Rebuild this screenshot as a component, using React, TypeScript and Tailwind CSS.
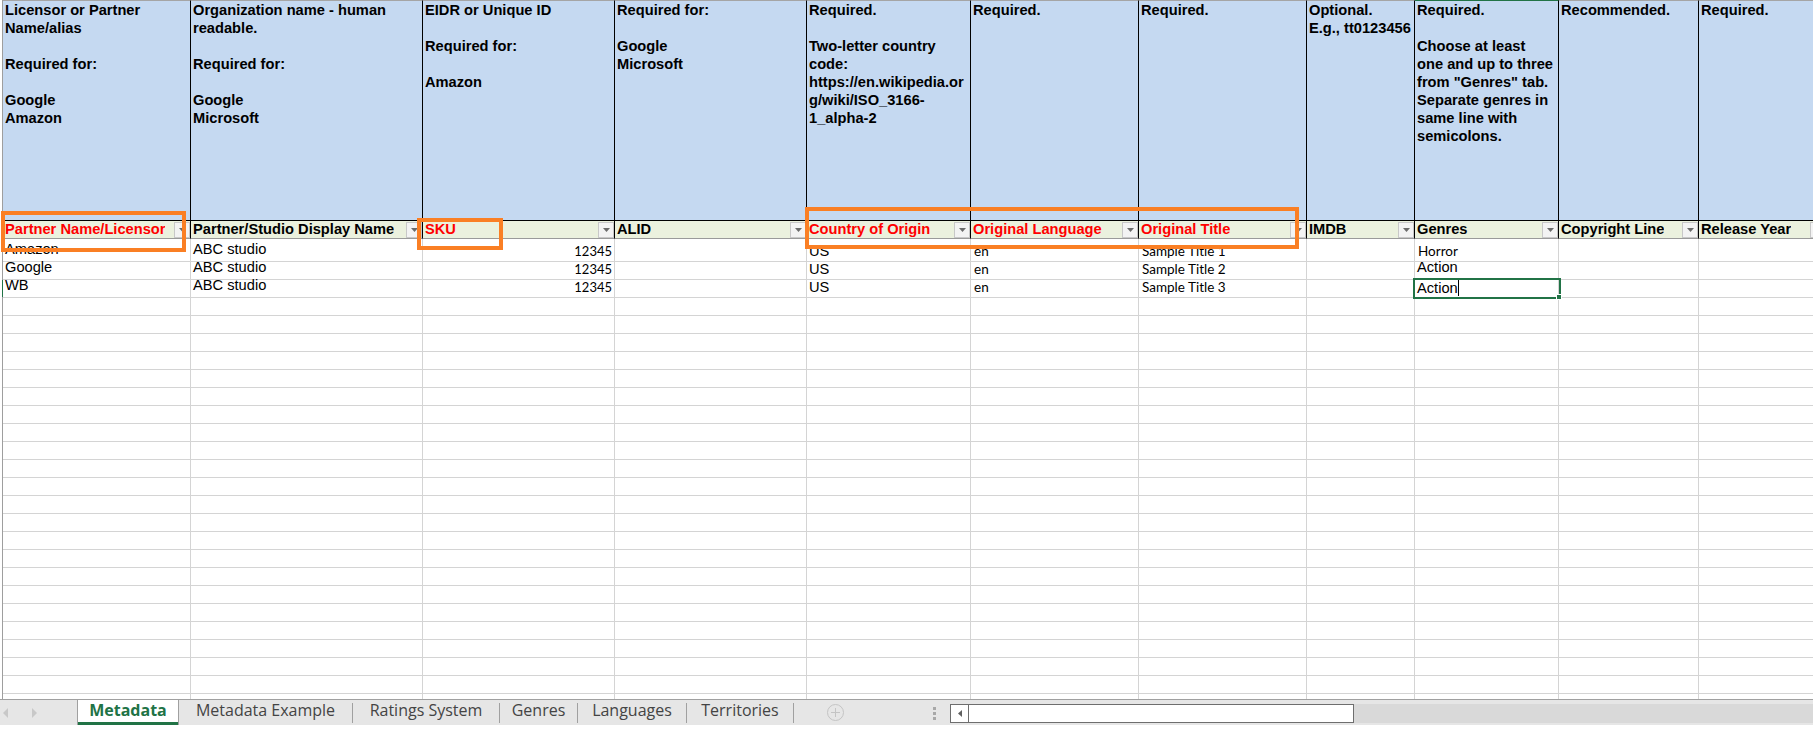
import React from 'react';

type Col = { w: number; head: string[]; filter: string; red?: boolean; sel?: boolean };
type Cell = { t: string; k: 'a' | 'u' | 'c' | 'n' | 'e' } | null;

const cols: Col[] = [
  { w: 188, head: ['Licensor or Partner', 'Name/alias', '', 'Required for:', '', 'Google', 'Amazon'], filter: 'Partner Name/Licensor', red: true },
  { w: 232, head: ['Organization name - human', 'readable.', '', 'Required for:', '', 'Google', 'Microsoft'], filter: 'Partner/Studio Display Name' },
  { w: 192, head: ['EIDR or Unique ID', '', 'Required for:', '', 'Amazon'], filter: 'SKU', red: true },
  { w: 192, head: ['Required for:', '', 'Google', 'Microsoft'], filter: 'ALID' },
  { w: 164, head: ['Required.', '', 'Two-letter country', 'code:', 'https://en.wikipedia.or', 'g/wiki/ISO_3166-', '1_alpha-2'], filter: 'Country of Origin', red: true },
  { w: 168, head: ['Required.'], filter: 'Original Language', red: true },
  { w: 168, head: ['Required.'], filter: 'Original Title', red: true },
  { w: 108, head: ['Optional.', 'E.g., tt0123456'], filter: 'IMDB' },
  { w: 144, head: ['Required.', '', 'Choose at least', 'one and up to three', 'from "Genres" tab.', 'Separate genres in', 'same line with', 'semicolons.'], filter: 'Genres', sel: true },
  { w: 140, head: ['Recommended.'], filter: 'Copyright Line' },
  { w: 128, head: ['Required.'], filter: 'Release Year' },
];

const data: Cell[][] = [
  [{ t: 'Amazon', k: 'a' }, { t: 'ABC studio', k: 'a' }, { t: '12345', k: 'n' }, null, { t: 'US', k: 'u' }, { t: 'en', k: 'c' }, { t: 'Sample Title 1', k: 'c' }, null, { t: 'Horror', k: 'c' }, null, null],
  [{ t: 'Google', k: 'a' }, { t: 'ABC studio', k: 'a' }, { t: '12345', k: 'n' }, null, { t: 'US', k: 'u' }, { t: 'en', k: 'c' }, { t: 'Sample Title 2', k: 'c' }, null, { t: 'Action', k: 'a' }, null, null],
  [{ t: 'WB', k: 'a' }, { t: 'ABC studio', k: 'a' }, { t: '12345', k: 'n' }, null, { t: 'US', k: 'u' }, { t: 'en', k: 'c' }, { t: 'Sample Title 3', k: 'c' }, null, { t: 'Action', k: 'e' }, null, null],
];

const ROWS = 26;

function FilterButton() {
  return (
    <div className="flex h-[16px] w-[16px] shrink-0 items-center justify-center border border-[#c8c8c8] bg-[#f3f3f3]">
      <svg width="7" height="4" viewBox="0 0 7 4">
        <path d="M0 0H7L3.5 4Z" fill="#6b6b6b" />
      </svg>
    </div>
  );
}

function DataCell({ cell, first }: { cell: Cell; first: boolean }) {
  const h = first ? 'h-[23px]' : 'h-[18px]';
  if (!cell) return <div className={`${h} border-b border-r border-[#d4d4d4]`} />;
  if (cell.k === 'n') {
    return (
      <div className={`${h} flex items-end justify-end border-b border-r border-[#d4d4d4] pr-[2px] pb-[1px] font-['Lato',sans-serif] text-[13px] leading-[18px] text-black`}>
        <span className="whitespace-nowrap">{cell.t}</span>
      </div>
    );
  }
  if (cell.k === 'c') {
    return (
      <div className={`${h} flex items-end border-b border-r border-[#d4d4d4] pl-[3px] pb-[1px] font-['Lato',sans-serif] text-[13.5px] leading-[18px] text-black`}>
        <span className="whitespace-nowrap">{cell.t}</span>
      </div>
    );
  }
  if (cell.k === 'e') {
    return (
      <div className={`${h} relative flex items-end border-b border-r border-[#d4d4d4] pl-[2px] font-['Liberation_Sans',Arial,sans-serif] text-[14.67px] leading-[18px] text-black`}>
        <span className="whitespace-nowrap">{cell.t}</span>
        <span className="mb-px inline-block h-[16px] w-px bg-black" />
        <div className="pointer-events-none absolute -left-[2px] -top-[2px] z-10 h-[21px] w-[148px] border-2 border-[#217346]">
          <div className="absolute -bottom-[3px] -right-[3px] h-[6px] w-[6px] border border-white bg-[#217346]" />
        </div>
      </div>
    );
  }
  return (
    <div className={`${h} flex items-end border-b border-r border-[#d4d4d4] pl-[2px] ${cell.k === 'u' ? 'pb-[1px]' : 'pb-[3px]'} font-['Liberation_Sans',Arial,sans-serif] text-[14.67px] leading-[18px] text-black`}>
      <span className="whitespace-nowrap">{cell.t}</span>
    </div>
  );
}

function Column({ col, idx }: { col: Col; idx: number }) {
  return (
    <div className="shrink-0" style={{ width: col.w }}>
      <div className={`h-[220px] border-r border-t border-r-black ${col.sel ? 'border-t-[#217346]' : 'border-t-[#a5a5a5]'} bg-[#c5d9f1] pl-[2px] font-['Liberation_Sans',Arial,sans-serif] text-[14.67px] font-bold leading-[18px] text-black`}>
        {col.head.map((l, i) => (
          <div key={i} className="h-[18px] whitespace-pre">{l}</div>
        ))}
      </div>
      <div className="flex h-[19px] items-end justify-between border-b border-r border-t border-b-[#9a9a9a] border-r-black border-t-black bg-[#ebf1de]">
        <span className={`self-center overflow-hidden whitespace-nowrap pl-[2px] font-['Liberation_Sans',Arial,sans-serif] text-[14.67px] font-bold leading-[17px] ${col.red ? 'text-[#ff0000]' : 'text-black'}`}>
          {col.filter}
        </span>
        <FilterButton />
      </div>
      {Array.from({ length: ROWS }).map((_, r) => (
        <DataCell key={r} cell={data[r] ? data[r][idx] : null} first={r === 0} />
      ))}
    </div>
  );
}

const tabs = [
  { name: 'Metadata Example', w: 174 },
  { name: 'Ratings System', w: 147 },
  { name: 'Genres', w: 78 },
  { name: 'Languages', w: 109 },
  { name: 'Territories', w: 107 },
];

function TabBar() {
  return (
    <div className="flex h-[26px] border-t border-[#a0a0a0] bg-[#e6e6e6] font-['Open_Sans',sans-serif] text-[16px]">
      <div className="flex w-[77px] shrink-0 items-start gap-[24px] pl-[3px] pt-[8px]">
        <svg width="5" height="10" viewBox="0 0 5 10">
          <path d="M5 0V10L0 5Z" fill="#c8c8c8" />
        </svg>
        <svg width="5" height="10" viewBox="0 0 5 10">
          <path d="M0 0V10L5 5Z" fill="#c8c8c8" />
        </svg>
      </div>
      <div className="relative flex w-[102px] shrink-0 justify-center border-x border-[#a0a0a0] bg-white">
        <span className="mt-[1px] font-bold leading-[18px] text-[#217346]">Metadata</span>
        <div className="absolute bottom-0 left-0 right-0 h-[3px] bg-[#217346]" />
      </div>
      {tabs.map((t) => (
        <div key={t.name} className="flex shrink-0 items-start" style={{ width: t.w }}>
          <div className="flex flex-1 justify-center">
            <span className="mt-[1px] whitespace-nowrap leading-[18px] text-[#444444]">{t.name}</span>
          </div>
          <div className="mt-[3px] h-[20px] w-px bg-[#a0a0a0]" />
        </div>
      ))}
      <div className="ml-[33px] mt-[4px] flex h-[17px] w-[17px] shrink-0 items-center justify-center rounded-full border border-[#c4c4c4]">
        <svg width="9" height="9" viewBox="0 0 9 9">
          <path d="M4.5 0V9M0 4.5H9" stroke="#c4c4c4" strokeWidth="1" />
        </svg>
      </div>
      <div className="ml-[89px] mt-[7px] flex shrink-0 flex-col gap-[2px]">
        <div className="h-[3px] w-[3px] bg-[#a8a8a8]" />
        <div className="h-[3px] w-[3px] bg-[#a8a8a8]" />
        <div className="h-[3px] w-[3px] bg-[#a8a8a8]" />
      </div>
      <div className="ml-[14px] mt-[4px] flex h-[19px] w-[404px] shrink-0 border border-[#6e6e6e] bg-white">
        <div className="flex w-[18px] items-center justify-center border-r border-[#6e6e6e]">
          <svg width="4" height="7" viewBox="0 0 4 7">
            <path d="M4 0V7L0 3.5Z" fill="#606060" />
          </svg>
        </div>
      </div>
      <div className="mt-[4px] h-[19px] flex-1 bg-[#d9d9d9]" />
    </div>
  );
}

export default function App() {
  return (
    <div className="relative h-[743px] w-[1813px] overflow-hidden bg-white">
      <div className="flex h-[699px] overflow-hidden">
        <div className="w-[2px] shrink-0" />
        <div className="flex shrink-0 items-start border-l border-[#9e9e9e]">
          {cols.map((c, i) => (
            <Column key={c.filter} col={c} idx={i} />
          ))}
        </div>
      </div>
      <TabBar />

      <div className="absolute left-[2px] top-[280px] h-[17px] w-px bg-[#217346]" />
      <div className="pointer-events-none absolute left-[1px] top-[211px] z-20 h-[41px] w-[185px] border-4 border-[#fa7f24]" />
      <div className="pointer-events-none absolute left-[417px] top-[218px] z-20 h-[32px] w-[86px] border-4 border-[#fa7f24]" />
      <div className="pointer-events-none absolute left-[805px] top-[207px] z-20 h-[42px] w-[494px] border-4 border-[#fa7f24]" />
    </div>
  );
}
